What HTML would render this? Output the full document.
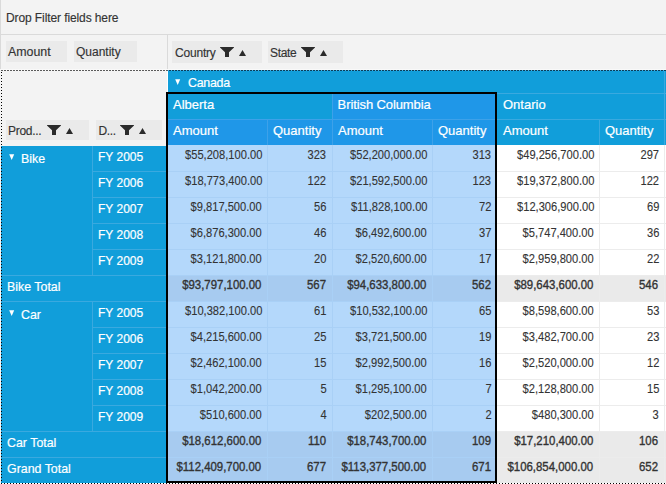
<!DOCTYPE html>
<html><head><meta charset="utf-8"><style>
html,body{margin:0;padding:0;width:666px;height:484px;overflow:hidden;background:#fff;}
body{position:relative;font-family:"Liberation Sans",sans-serif;}
div,span,svg{position:absolute;}
.t{white-space:nowrap;}
</style></head><body>
<div style="left:0px;top:0px;width:666px;height:70px;background:#f3f3f3;"></div>
<div style="left:0px;top:0px;width:1px;height:70px;background:#dadada;"></div>
<div style="left:0px;top:34px;width:666px;height:1px;background:#dadada;"></div>
<div style="left:167px;top:35px;width:1px;height:35px;background:#dadada;"></div>
<span class="t" style="top:11.84px;font-size:12px;line-height:12px;color:#333333;letter-spacing:-0.1px;-webkit-text-stroke:0.15px #333333;left:6px;">Drop Filter fields here</span>
<div style="left:6px;top:41px;width:61px;height:21px;background:#eaeaea;"></div>
<span class="t" style="top:45.50px;font-size:12.4px;line-height:12.4px;color:#333333;-webkit-text-stroke:0.15px #333333;left:8px;">Amount</span>
<div style="left:74px;top:41px;width:63px;height:21px;background:#eaeaea;"></div>
<span class="t" style="top:45.84px;font-size:12px;line-height:12px;color:#333333;-webkit-text-stroke:0.15px #333333;left:76px;">Quantity</span>
<div style="left:172px;top:41px;width:90px;height:22px;background:#eaeaea;"></div>
<span class="t" style="top:46.84px;font-size:12px;line-height:12px;color:#333333;letter-spacing:-0.2px;-webkit-text-stroke:0.15px #333333;left:175px;">Country</span>
<svg style="left:220px;top:47px" width="14" height="10" viewBox="0 0 14 10"><path d="M0 0H14V0.6L9 5.2V10H5V5.2L0 0.6Z" fill="#2b2b2b"/></svg>
<svg style="left:239px;top:50px" width="7" height="6" viewBox="0 0 7 6"><path d="M3.5 0L7 6H0Z" fill="#2b2b2b"/></svg>
<div style="left:268px;top:41px;width:75px;height:22px;background:#eaeaea;"></div>
<span class="t" style="top:46.84px;font-size:12px;line-height:12px;color:#333333;letter-spacing:-0.35px;-webkit-text-stroke:0.15px #333333;left:270px;">State</span>
<svg style="left:301px;top:47px" width="14" height="10" viewBox="0 0 14 10"><path d="M0 0H14V0.6L9 5.2V10H5V5.2L0 0.6Z" fill="#2b2b2b"/></svg>
<svg style="left:320px;top:50px" width="7" height="6" viewBox="0 0 7 6"><path d="M3.5 0L7 6H0Z" fill="#2b2b2b"/></svg>
<div style="left:0px;top:70px;width:167px;height:76px;background:#f3f3f3;"></div>
<div style="left:6px;top:120px;width:83px;height:20px;background:#eaeaea;"></div>
<span class="t" style="top:124.84px;font-size:12px;line-height:12px;color:#333333;letter-spacing:-0.3px;-webkit-text-stroke:0.15px #333333;left:8px;">Prod...</span>
<svg style="left:47px;top:125px" width="14" height="10" viewBox="0 0 14 10"><path d="M0 0H14V0.6L9 5.2V10H5V5.2L0 0.6Z" fill="#2b2b2b"/></svg>
<svg style="left:66px;top:128px" width="7" height="6" viewBox="0 0 7 6"><path d="M3.5 0L7 6H0Z" fill="#2b2b2b"/></svg>
<div style="left:96px;top:120px;width:66px;height:20px;background:#eaeaea;"></div>
<span class="t" style="top:124.84px;font-size:12px;line-height:12px;color:#333333;letter-spacing:-0.4px;-webkit-text-stroke:0.15px #333333;left:98.5px;">D...</span>
<svg style="left:120px;top:125px" width="14" height="10" viewBox="0 0 14 10"><path d="M0 0H14V0.6L9 5.2V10H5V5.2L0 0.6Z" fill="#2b2b2b"/></svg>
<svg style="left:139px;top:128px" width="7" height="6" viewBox="0 0 7 6"><path d="M3.5 0L7 6H0Z" fill="#2b2b2b"/></svg>
<div style="left:168px;top:71px;width:498px;height:74px;background:#119eda;"></div>
<div style="left:168px;top:93px;width:498px;height:1px;background:#3aa9df;"></div>
<div style="left:497px;top:119px;width:169px;height:1px;background:#3aa9df;"></div>
<div style="left:333px;top:94px;width:162px;height:25px;background:#1f97e8;"></div>
<div style="left:168px;top:120px;width:327px;height:25px;background:#1f97e8;"></div>
<div style="left:168px;top:119px;width:327px;height:1px;background:#3da1e9;"></div>
<div style="left:267px;top:120px;width:1px;height:25px;background:#3da1e9;"></div>
<div style="left:332px;top:94px;width:1px;height:51px;background:#3da1e9;"></div>
<div style="left:432px;top:120px;width:1px;height:25px;background:#3da1e9;"></div>
<div style="left:599px;top:120px;width:1px;height:25px;background:#3aa9df;"></div>
<div style="left:664px;top:71px;width:1px;height:74px;background:#3aa9df;"></div>
<span class="t" style="top:77.00px;font-size:12.4px;line-height:12.4px;color:#fff;letter-spacing:-0.25px;-webkit-text-stroke:0.2px #fff;left:188px;">Canada</span>
<svg style="left:175px;top:79px" width="6" height="6" viewBox="0 0 6 6"><path d="M0.2 0.2H5.2L2.7 5.9Z" fill="#fff"/></svg>
<span class="t" style="top:97.50px;font-size:13px;line-height:13px;color:#fff;-webkit-text-stroke:0.2px #fff;left:173px;">Alberta</span>
<span class="t" style="top:97.50px;font-size:13px;line-height:13px;color:#fff;letter-spacing:-0.1px;-webkit-text-stroke:0.2px #fff;left:337.6px;">British Columbia</span>
<span class="t" style="top:97.50px;font-size:13px;line-height:13px;color:#fff;-webkit-text-stroke:0.2px #fff;left:503px;">Ontario</span>
<span class="t" style="top:123.50px;font-size:13px;line-height:13px;color:#fff;-webkit-text-stroke:0.2px #fff;left:173px;">Amount</span>
<span class="t" style="top:123.50px;font-size:13px;line-height:13px;color:#fff;-webkit-text-stroke:0.2px #fff;left:338px;">Amount</span>
<span class="t" style="top:123.50px;font-size:13px;line-height:13px;color:#fff;-webkit-text-stroke:0.2px #fff;left:503px;">Amount</span>
<span class="t" style="top:123.50px;font-size:13px;line-height:13px;color:#fff;-webkit-text-stroke:0.2px #fff;left:273px;">Quantity</span>
<span class="t" style="top:123.50px;font-size:13px;line-height:13px;color:#fff;-webkit-text-stroke:0.2px #fff;left:438px;">Quantity</span>
<span class="t" style="top:123.50px;font-size:13px;line-height:13px;color:#fff;-webkit-text-stroke:0.2px #fff;left:605px;">Quantity</span>
<div style="left:1px;top:146px;width:165px;height:337px;background:#119eda;"></div>
<div style="left:93px;top:171px;width:73px;height:1px;background:#3aa9df;"></div>
<div style="left:93px;top:197px;width:73px;height:1px;background:#3aa9df;"></div>
<div style="left:93px;top:223px;width:73px;height:1px;background:#3aa9df;"></div>
<div style="left:93px;top:249px;width:73px;height:1px;background:#3aa9df;"></div>
<div style="left:1px;top:275px;width:165px;height:1px;background:#3aa9df;"></div>
<div style="left:1px;top:301px;width:165px;height:1px;background:#3aa9df;"></div>
<div style="left:93px;top:327px;width:73px;height:1px;background:#3aa9df;"></div>
<div style="left:93px;top:353px;width:73px;height:1px;background:#3aa9df;"></div>
<div style="left:93px;top:379px;width:73px;height:1px;background:#3aa9df;"></div>
<div style="left:93px;top:405px;width:73px;height:1px;background:#3aa9df;"></div>
<div style="left:1px;top:431px;width:165px;height:1px;background:#3aa9df;"></div>
<div style="left:1px;top:457px;width:165px;height:1px;background:#3aa9df;"></div>
<div style="left:92px;top:146px;width:1px;height:129px;background:#3aa9df;"></div>
<div style="left:92px;top:302px;width:1px;height:129px;background:#3aa9df;"></div>
<span class="t" style="top:150.84px;font-size:12px;line-height:12px;color:#fff;-webkit-text-stroke:0.2px #fff;left:98px;">FY 2005</span>
<span class="t" style="top:176.84px;font-size:12px;line-height:12px;color:#fff;-webkit-text-stroke:0.2px #fff;left:98px;">FY 2006</span>
<span class="t" style="top:202.84px;font-size:12px;line-height:12px;color:#fff;-webkit-text-stroke:0.2px #fff;left:98px;">FY 2007</span>
<span class="t" style="top:228.84px;font-size:12px;line-height:12px;color:#fff;-webkit-text-stroke:0.2px #fff;left:98px;">FY 2008</span>
<span class="t" style="top:254.84px;font-size:12px;line-height:12px;color:#fff;-webkit-text-stroke:0.2px #fff;left:98px;">FY 2009</span>
<span class="t" style="top:280.50px;font-size:12.4px;line-height:12.4px;color:#fff;-webkit-text-stroke:0.2px #fff;left:7px;">Bike Total</span>
<span class="t" style="top:306.84px;font-size:12px;line-height:12px;color:#fff;-webkit-text-stroke:0.2px #fff;left:98px;">FY 2005</span>
<span class="t" style="top:332.84px;font-size:12px;line-height:12px;color:#fff;-webkit-text-stroke:0.2px #fff;left:98px;">FY 2006</span>
<span class="t" style="top:358.84px;font-size:12px;line-height:12px;color:#fff;-webkit-text-stroke:0.2px #fff;left:98px;">FY 2007</span>
<span class="t" style="top:384.84px;font-size:12px;line-height:12px;color:#fff;-webkit-text-stroke:0.2px #fff;left:98px;">FY 2008</span>
<span class="t" style="top:410.84px;font-size:12px;line-height:12px;color:#fff;-webkit-text-stroke:0.2px #fff;left:98px;">FY 2009</span>
<span class="t" style="top:436.50px;font-size:12.4px;line-height:12.4px;color:#fff;-webkit-text-stroke:0.2px #fff;left:7px;">Car Total</span>
<span class="t" style="top:462.50px;font-size:12.4px;line-height:12.4px;color:#fff;-webkit-text-stroke:0.2px #fff;left:7px;">Grand Total</span>
<span class="t" style="top:152.50px;font-size:12.4px;line-height:12.4px;color:#fff;-webkit-text-stroke:0.2px #fff;left:21px;">Bike</span>
<svg style="left:9px;top:154px" width="6" height="6" viewBox="0 0 6 6"><path d="M0.2 0.2H5.2L2.7 5.9Z" fill="#fff"/></svg>
<span class="t" style="top:308.50px;font-size:12.4px;line-height:12.4px;color:#fff;-webkit-text-stroke:0.2px #fff;left:21px;">Car</span>
<svg style="left:9px;top:310px" width="6" height="6" viewBox="0 0 6 6"><path d="M0.2 0.2H5.2L2.7 5.9Z" fill="#fff"/></svg>
<div style="left:168px;top:145px;width:327px;height:338px;background:#b4d8fb;"></div>
<div style="left:497px;top:145px;width:169px;height:338px;background:#ffffff;"></div>
<div style="left:168px;top:432px;width:327px;height:25px;background:#a7cbf0;"></div>
<div style="left:497px;top:432px;width:169px;height:25px;background:#eaeaea;"></div>
<div style="left:168px;top:458px;width:327px;height:25px;background:#a7cbf0;"></div>
<div style="left:497px;top:458px;width:169px;height:25px;background:#eaeaea;"></div>
<div style="left:168px;top:276px;width:327px;height:25px;background:#a7cbf0;"></div>
<div style="left:497px;top:276px;width:169px;height:25px;background:#eaeaea;"></div>
<div style="left:168px;top:171px;width:327px;height:1px;background:#a9d0f6;"></div>
<div style="left:497px;top:171px;width:169px;height:1px;background:#ececec;"></div>
<div style="left:168px;top:197px;width:327px;height:1px;background:#a9d0f6;"></div>
<div style="left:497px;top:197px;width:169px;height:1px;background:#ececec;"></div>
<div style="left:168px;top:223px;width:327px;height:1px;background:#a9d0f6;"></div>
<div style="left:497px;top:223px;width:169px;height:1px;background:#ececec;"></div>
<div style="left:168px;top:249px;width:327px;height:1px;background:#a9d0f6;"></div>
<div style="left:497px;top:249px;width:169px;height:1px;background:#ececec;"></div>
<div style="left:168px;top:275px;width:327px;height:1px;background:#a9d0f6;"></div>
<div style="left:497px;top:275px;width:169px;height:1px;background:#ececec;"></div>
<div style="left:168px;top:301px;width:327px;height:1px;background:#a9d0f6;"></div>
<div style="left:497px;top:301px;width:169px;height:1px;background:#ececec;"></div>
<div style="left:168px;top:327px;width:327px;height:1px;background:#a9d0f6;"></div>
<div style="left:497px;top:327px;width:169px;height:1px;background:#ececec;"></div>
<div style="left:168px;top:353px;width:327px;height:1px;background:#a9d0f6;"></div>
<div style="left:497px;top:353px;width:169px;height:1px;background:#ececec;"></div>
<div style="left:168px;top:379px;width:327px;height:1px;background:#a9d0f6;"></div>
<div style="left:497px;top:379px;width:169px;height:1px;background:#ececec;"></div>
<div style="left:168px;top:405px;width:327px;height:1px;background:#a9d0f6;"></div>
<div style="left:497px;top:405px;width:169px;height:1px;background:#ececec;"></div>
<div style="left:168px;top:431px;width:327px;height:1px;background:#a9d0f6;"></div>
<div style="left:497px;top:431px;width:169px;height:1px;background:#ececec;"></div>
<div style="left:168px;top:457px;width:327px;height:1px;background:#a9d0f6;"></div>
<div style="left:497px;top:457px;width:169px;height:1px;background:#ececec;"></div>
<div style="left:267px;top:145px;width:1px;height:338px;background:#a9d0f6;"></div>
<div style="left:332px;top:145px;width:1px;height:338px;background:#a9d0f6;"></div>
<div style="left:432px;top:145px;width:1px;height:338px;background:#a9d0f6;"></div>
<div style="left:599px;top:145px;width:1px;height:338px;background:#ececec;"></div>
<div style="left:664px;top:145px;width:1px;height:338px;background:#ececec;"></div>
<span class="t" style="top:148.84px;font-size:12px;line-height:12px;color:#333;transform:scaleX(0.928);transform-origin:100% 0;-webkit-text-stroke:0.1px #333;right:404.00px;text-align:right;">$55,208,100.00</span>
<span class="t" style="top:148.84px;font-size:12px;line-height:12px;color:#333;transform:scaleX(0.928);transform-origin:100% 0;-webkit-text-stroke:0.1px #333;right:339.50px;text-align:right;">323</span>
<span class="t" style="top:148.84px;font-size:12px;line-height:12px;color:#333;transform:scaleX(0.928);transform-origin:100% 0;-webkit-text-stroke:0.1px #333;right:238.80px;text-align:right;">$52,200,000.00</span>
<span class="t" style="top:148.84px;font-size:12px;line-height:12px;color:#333;transform:scaleX(0.928);transform-origin:100% 0;-webkit-text-stroke:0.1px #333;right:174.50px;text-align:right;">313</span>
<span class="t" style="top:148.84px;font-size:12px;line-height:12px;color:#333;transform:scaleX(0.928);transform-origin:100% 0;-webkit-text-stroke:0.1px #333;right:72.00px;text-align:right;">$49,256,700.00</span>
<span class="t" style="top:148.84px;font-size:12px;line-height:12px;color:#333;transform:scaleX(0.928);transform-origin:100% 0;-webkit-text-stroke:0.1px #333;right:7.00px;text-align:right;">297</span>
<span class="t" style="top:174.84px;font-size:12px;line-height:12px;color:#333;transform:scaleX(0.928);transform-origin:100% 0;-webkit-text-stroke:0.1px #333;right:404.00px;text-align:right;">$18,773,400.00</span>
<span class="t" style="top:174.84px;font-size:12px;line-height:12px;color:#333;transform:scaleX(0.928);transform-origin:100% 0;-webkit-text-stroke:0.1px #333;right:339.50px;text-align:right;">122</span>
<span class="t" style="top:174.84px;font-size:12px;line-height:12px;color:#333;transform:scaleX(0.928);transform-origin:100% 0;-webkit-text-stroke:0.1px #333;right:238.80px;text-align:right;">$21,592,500.00</span>
<span class="t" style="top:174.84px;font-size:12px;line-height:12px;color:#333;transform:scaleX(0.928);transform-origin:100% 0;-webkit-text-stroke:0.1px #333;right:174.50px;text-align:right;">123</span>
<span class="t" style="top:174.84px;font-size:12px;line-height:12px;color:#333;transform:scaleX(0.928);transform-origin:100% 0;-webkit-text-stroke:0.1px #333;right:72.00px;text-align:right;">$19,372,800.00</span>
<span class="t" style="top:174.84px;font-size:12px;line-height:12px;color:#333;transform:scaleX(0.928);transform-origin:100% 0;-webkit-text-stroke:0.1px #333;right:7.00px;text-align:right;">122</span>
<span class="t" style="top:200.84px;font-size:12px;line-height:12px;color:#333;transform:scaleX(0.928);transform-origin:100% 0;-webkit-text-stroke:0.1px #333;right:404.00px;text-align:right;">$9,817,500.00</span>
<span class="t" style="top:200.84px;font-size:12px;line-height:12px;color:#333;transform:scaleX(0.928);transform-origin:100% 0;-webkit-text-stroke:0.1px #333;right:339.50px;text-align:right;">56</span>
<span class="t" style="top:200.84px;font-size:12px;line-height:12px;color:#333;transform:scaleX(0.928);transform-origin:100% 0;-webkit-text-stroke:0.1px #333;right:238.80px;text-align:right;">$11,828,100.00</span>
<span class="t" style="top:200.84px;font-size:12px;line-height:12px;color:#333;transform:scaleX(0.928);transform-origin:100% 0;-webkit-text-stroke:0.1px #333;right:174.50px;text-align:right;">72</span>
<span class="t" style="top:200.84px;font-size:12px;line-height:12px;color:#333;transform:scaleX(0.928);transform-origin:100% 0;-webkit-text-stroke:0.1px #333;right:72.00px;text-align:right;">$12,306,900.00</span>
<span class="t" style="top:200.84px;font-size:12px;line-height:12px;color:#333;transform:scaleX(0.928);transform-origin:100% 0;-webkit-text-stroke:0.1px #333;right:7.00px;text-align:right;">69</span>
<span class="t" style="top:226.84px;font-size:12px;line-height:12px;color:#333;transform:scaleX(0.928);transform-origin:100% 0;-webkit-text-stroke:0.1px #333;right:404.00px;text-align:right;">$6,876,300.00</span>
<span class="t" style="top:226.84px;font-size:12px;line-height:12px;color:#333;transform:scaleX(0.928);transform-origin:100% 0;-webkit-text-stroke:0.1px #333;right:339.50px;text-align:right;">46</span>
<span class="t" style="top:226.84px;font-size:12px;line-height:12px;color:#333;transform:scaleX(0.928);transform-origin:100% 0;-webkit-text-stroke:0.1px #333;right:238.80px;text-align:right;">$6,492,600.00</span>
<span class="t" style="top:226.84px;font-size:12px;line-height:12px;color:#333;transform:scaleX(0.928);transform-origin:100% 0;-webkit-text-stroke:0.1px #333;right:174.50px;text-align:right;">37</span>
<span class="t" style="top:226.84px;font-size:12px;line-height:12px;color:#333;transform:scaleX(0.928);transform-origin:100% 0;-webkit-text-stroke:0.1px #333;right:72.00px;text-align:right;">$5,747,400.00</span>
<span class="t" style="top:226.84px;font-size:12px;line-height:12px;color:#333;transform:scaleX(0.928);transform-origin:100% 0;-webkit-text-stroke:0.1px #333;right:7.00px;text-align:right;">36</span>
<span class="t" style="top:252.84px;font-size:12px;line-height:12px;color:#333;transform:scaleX(0.928);transform-origin:100% 0;-webkit-text-stroke:0.1px #333;right:404.00px;text-align:right;">$3,121,800.00</span>
<span class="t" style="top:252.84px;font-size:12px;line-height:12px;color:#333;transform:scaleX(0.928);transform-origin:100% 0;-webkit-text-stroke:0.1px #333;right:339.50px;text-align:right;">20</span>
<span class="t" style="top:252.84px;font-size:12px;line-height:12px;color:#333;transform:scaleX(0.928);transform-origin:100% 0;-webkit-text-stroke:0.1px #333;right:238.80px;text-align:right;">$2,520,600.00</span>
<span class="t" style="top:252.84px;font-size:12px;line-height:12px;color:#333;transform:scaleX(0.928);transform-origin:100% 0;-webkit-text-stroke:0.1px #333;right:174.50px;text-align:right;">17</span>
<span class="t" style="top:252.84px;font-size:12px;line-height:12px;color:#333;transform:scaleX(0.928);transform-origin:100% 0;-webkit-text-stroke:0.1px #333;right:72.00px;text-align:right;">$2,959,800.00</span>
<span class="t" style="top:252.84px;font-size:12px;line-height:12px;color:#333;transform:scaleX(0.928);transform-origin:100% 0;-webkit-text-stroke:0.1px #333;right:7.00px;text-align:right;">22</span>
<span class="t" style="top:278.84px;font-size:12px;line-height:12px;color:#333;transform:scaleX(0.95);transform-origin:100% 0;-webkit-text-stroke:0.35px #333;right:404.80px;text-align:right;">$93,797,100.00</span>
<span class="t" style="top:278.84px;font-size:12px;line-height:12px;color:#333;transform:scaleX(0.95);transform-origin:100% 0;-webkit-text-stroke:0.35px #333;right:340.30px;text-align:right;">567</span>
<span class="t" style="top:278.84px;font-size:12px;line-height:12px;color:#333;transform:scaleX(0.95);transform-origin:100% 0;-webkit-text-stroke:0.35px #333;right:239.60px;text-align:right;">$94,633,800.00</span>
<span class="t" style="top:278.84px;font-size:12px;line-height:12px;color:#333;transform:scaleX(0.95);transform-origin:100% 0;-webkit-text-stroke:0.35px #333;right:175.30px;text-align:right;">562</span>
<span class="t" style="top:278.84px;font-size:12px;line-height:12px;color:#333;transform:scaleX(0.95);transform-origin:100% 0;-webkit-text-stroke:0.35px #333;right:72.80px;text-align:right;">$89,643,600.00</span>
<span class="t" style="top:278.84px;font-size:12px;line-height:12px;color:#333;transform:scaleX(0.95);transform-origin:100% 0;-webkit-text-stroke:0.35px #333;right:7.80px;text-align:right;">546</span>
<span class="t" style="top:304.84px;font-size:12px;line-height:12px;color:#333;transform:scaleX(0.928);transform-origin:100% 0;-webkit-text-stroke:0.1px #333;right:404.00px;text-align:right;">$10,382,100.00</span>
<span class="t" style="top:304.84px;font-size:12px;line-height:12px;color:#333;transform:scaleX(0.928);transform-origin:100% 0;-webkit-text-stroke:0.1px #333;right:339.50px;text-align:right;">61</span>
<span class="t" style="top:304.84px;font-size:12px;line-height:12px;color:#333;transform:scaleX(0.928);transform-origin:100% 0;-webkit-text-stroke:0.1px #333;right:238.80px;text-align:right;">$10,532,100.00</span>
<span class="t" style="top:304.84px;font-size:12px;line-height:12px;color:#333;transform:scaleX(0.928);transform-origin:100% 0;-webkit-text-stroke:0.1px #333;right:174.50px;text-align:right;">65</span>
<span class="t" style="top:304.84px;font-size:12px;line-height:12px;color:#333;transform:scaleX(0.928);transform-origin:100% 0;-webkit-text-stroke:0.1px #333;right:72.00px;text-align:right;">$8,598,600.00</span>
<span class="t" style="top:304.84px;font-size:12px;line-height:12px;color:#333;transform:scaleX(0.928);transform-origin:100% 0;-webkit-text-stroke:0.1px #333;right:7.00px;text-align:right;">53</span>
<span class="t" style="top:330.84px;font-size:12px;line-height:12px;color:#333;transform:scaleX(0.928);transform-origin:100% 0;-webkit-text-stroke:0.1px #333;right:404.00px;text-align:right;">$4,215,600.00</span>
<span class="t" style="top:330.84px;font-size:12px;line-height:12px;color:#333;transform:scaleX(0.928);transform-origin:100% 0;-webkit-text-stroke:0.1px #333;right:339.50px;text-align:right;">25</span>
<span class="t" style="top:330.84px;font-size:12px;line-height:12px;color:#333;transform:scaleX(0.928);transform-origin:100% 0;-webkit-text-stroke:0.1px #333;right:238.80px;text-align:right;">$3,721,500.00</span>
<span class="t" style="top:330.84px;font-size:12px;line-height:12px;color:#333;transform:scaleX(0.928);transform-origin:100% 0;-webkit-text-stroke:0.1px #333;right:174.50px;text-align:right;">19</span>
<span class="t" style="top:330.84px;font-size:12px;line-height:12px;color:#333;transform:scaleX(0.928);transform-origin:100% 0;-webkit-text-stroke:0.1px #333;right:72.00px;text-align:right;">$3,482,700.00</span>
<span class="t" style="top:330.84px;font-size:12px;line-height:12px;color:#333;transform:scaleX(0.928);transform-origin:100% 0;-webkit-text-stroke:0.1px #333;right:7.00px;text-align:right;">23</span>
<span class="t" style="top:356.84px;font-size:12px;line-height:12px;color:#333;transform:scaleX(0.928);transform-origin:100% 0;-webkit-text-stroke:0.1px #333;right:404.00px;text-align:right;">$2,462,100.00</span>
<span class="t" style="top:356.84px;font-size:12px;line-height:12px;color:#333;transform:scaleX(0.928);transform-origin:100% 0;-webkit-text-stroke:0.1px #333;right:339.50px;text-align:right;">15</span>
<span class="t" style="top:356.84px;font-size:12px;line-height:12px;color:#333;transform:scaleX(0.928);transform-origin:100% 0;-webkit-text-stroke:0.1px #333;right:238.80px;text-align:right;">$2,992,500.00</span>
<span class="t" style="top:356.84px;font-size:12px;line-height:12px;color:#333;transform:scaleX(0.928);transform-origin:100% 0;-webkit-text-stroke:0.1px #333;right:174.50px;text-align:right;">16</span>
<span class="t" style="top:356.84px;font-size:12px;line-height:12px;color:#333;transform:scaleX(0.928);transform-origin:100% 0;-webkit-text-stroke:0.1px #333;right:72.00px;text-align:right;">$2,520,000.00</span>
<span class="t" style="top:356.84px;font-size:12px;line-height:12px;color:#333;transform:scaleX(0.928);transform-origin:100% 0;-webkit-text-stroke:0.1px #333;right:7.00px;text-align:right;">12</span>
<span class="t" style="top:382.84px;font-size:12px;line-height:12px;color:#333;transform:scaleX(0.928);transform-origin:100% 0;-webkit-text-stroke:0.1px #333;right:404.00px;text-align:right;">$1,042,200.00</span>
<span class="t" style="top:382.84px;font-size:12px;line-height:12px;color:#333;transform:scaleX(0.928);transform-origin:100% 0;-webkit-text-stroke:0.1px #333;right:339.50px;text-align:right;">5</span>
<span class="t" style="top:382.84px;font-size:12px;line-height:12px;color:#333;transform:scaleX(0.928);transform-origin:100% 0;-webkit-text-stroke:0.1px #333;right:238.80px;text-align:right;">$1,295,100.00</span>
<span class="t" style="top:382.84px;font-size:12px;line-height:12px;color:#333;transform:scaleX(0.928);transform-origin:100% 0;-webkit-text-stroke:0.1px #333;right:174.50px;text-align:right;">7</span>
<span class="t" style="top:382.84px;font-size:12px;line-height:12px;color:#333;transform:scaleX(0.928);transform-origin:100% 0;-webkit-text-stroke:0.1px #333;right:72.00px;text-align:right;">$2,128,800.00</span>
<span class="t" style="top:382.84px;font-size:12px;line-height:12px;color:#333;transform:scaleX(0.928);transform-origin:100% 0;-webkit-text-stroke:0.1px #333;right:7.00px;text-align:right;">15</span>
<span class="t" style="top:408.84px;font-size:12px;line-height:12px;color:#333;transform:scaleX(0.928);transform-origin:100% 0;-webkit-text-stroke:0.1px #333;right:404.00px;text-align:right;">$510,600.00</span>
<span class="t" style="top:408.84px;font-size:12px;line-height:12px;color:#333;transform:scaleX(0.928);transform-origin:100% 0;-webkit-text-stroke:0.1px #333;right:339.50px;text-align:right;">4</span>
<span class="t" style="top:408.84px;font-size:12px;line-height:12px;color:#333;transform:scaleX(0.928);transform-origin:100% 0;-webkit-text-stroke:0.1px #333;right:238.80px;text-align:right;">$202,500.00</span>
<span class="t" style="top:408.84px;font-size:12px;line-height:12px;color:#333;transform:scaleX(0.928);transform-origin:100% 0;-webkit-text-stroke:0.1px #333;right:174.50px;text-align:right;">2</span>
<span class="t" style="top:408.84px;font-size:12px;line-height:12px;color:#333;transform:scaleX(0.928);transform-origin:100% 0;-webkit-text-stroke:0.1px #333;right:72.00px;text-align:right;">$480,300.00</span>
<span class="t" style="top:408.84px;font-size:12px;line-height:12px;color:#333;transform:scaleX(0.928);transform-origin:100% 0;-webkit-text-stroke:0.1px #333;right:7.00px;text-align:right;">3</span>
<span class="t" style="top:434.84px;font-size:12px;line-height:12px;color:#333;transform:scaleX(0.95);transform-origin:100% 0;-webkit-text-stroke:0.35px #333;right:404.80px;text-align:right;">$18,612,600.00</span>
<span class="t" style="top:434.84px;font-size:12px;line-height:12px;color:#333;transform:scaleX(0.95);transform-origin:100% 0;-webkit-text-stroke:0.35px #333;right:340.30px;text-align:right;">110</span>
<span class="t" style="top:434.84px;font-size:12px;line-height:12px;color:#333;transform:scaleX(0.95);transform-origin:100% 0;-webkit-text-stroke:0.35px #333;right:239.60px;text-align:right;">$18,743,700.00</span>
<span class="t" style="top:434.84px;font-size:12px;line-height:12px;color:#333;transform:scaleX(0.95);transform-origin:100% 0;-webkit-text-stroke:0.35px #333;right:175.30px;text-align:right;">109</span>
<span class="t" style="top:434.84px;font-size:12px;line-height:12px;color:#333;transform:scaleX(0.95);transform-origin:100% 0;-webkit-text-stroke:0.35px #333;right:72.80px;text-align:right;">$17,210,400.00</span>
<span class="t" style="top:434.84px;font-size:12px;line-height:12px;color:#333;transform:scaleX(0.95);transform-origin:100% 0;-webkit-text-stroke:0.35px #333;right:7.80px;text-align:right;">106</span>
<span class="t" style="top:460.84px;font-size:12px;line-height:12px;color:#333;transform:scaleX(0.95);transform-origin:100% 0;-webkit-text-stroke:0.35px #333;right:404.80px;text-align:right;">$112,409,700.00</span>
<span class="t" style="top:460.84px;font-size:12px;line-height:12px;color:#333;transform:scaleX(0.95);transform-origin:100% 0;-webkit-text-stroke:0.35px #333;right:340.30px;text-align:right;">677</span>
<span class="t" style="top:460.84px;font-size:12px;line-height:12px;color:#333;transform:scaleX(0.95);transform-origin:100% 0;-webkit-text-stroke:0.35px #333;right:239.60px;text-align:right;">$113,377,500.00</span>
<span class="t" style="top:460.84px;font-size:12px;line-height:12px;color:#333;transform:scaleX(0.95);transform-origin:100% 0;-webkit-text-stroke:0.35px #333;right:175.30px;text-align:right;">671</span>
<span class="t" style="top:460.84px;font-size:12px;line-height:12px;color:#333;transform:scaleX(0.95);transform-origin:100% 0;-webkit-text-stroke:0.35px #333;right:72.80px;text-align:right;">$106,854,000.00</span>
<span class="t" style="top:460.84px;font-size:12px;line-height:12px;color:#333;transform:scaleX(0.95);transform-origin:100% 0;-webkit-text-stroke:0.35px #333;right:7.80px;text-align:right;">652</span>
<div style="left:166px;top:92px;width:331px;height:2px;background:#000;"></div>
<div style="left:166px;top:481px;width:331px;height:2px;background:#000;"></div>
<div style="left:166px;top:92px;width:2px;height:391px;background:#000;"></div>
<div style="left:495px;top:92px;width:2px;height:391px;background:#000;"></div>
<div style="left:0px;top:69px;width:666px;height:1px;background:#f9f9f9"></div>
<div style="left:1px;top:70px;width:167px;height:1px;background:repeating-linear-gradient(90deg,#5a5a5a 0 2px,#f8f8f8 2px 3px)"></div>
<div style="left:168px;top:70px;width:498px;height:1px;background:repeating-linear-gradient(90deg,#0d3d58 0 2px,#3db4ec 2px 3px);background-position:-167px 0"></div>
<div style="left:0px;top:483px;width:666px;height:1px;background:repeating-linear-gradient(90deg,#fff 0 1px,#000 1px 2px,#fff 2px 3px)"></div>
<div style="left:0px;top:71px;width:1px;height:412px;background:#f6f6f6"></div>
<div style="left:1px;top:71px;width:1px;height:412px;background:repeating-linear-gradient(180deg,transparent 0 1px,#000 1px 2px,transparent 2px 3px)"></div>
</body></html>
